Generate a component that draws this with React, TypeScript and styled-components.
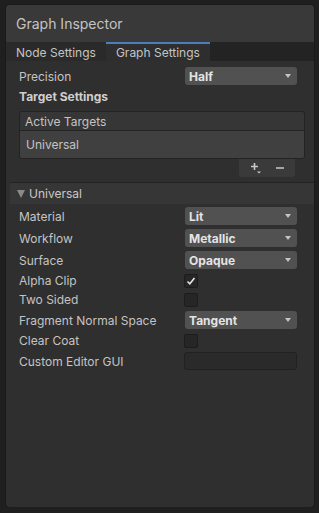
import styled, { createGlobalStyle } from "styled-components";

const Global = createGlobalStyle`
    html, body {
        margin: 0;
        background: #1f1f1f;
        font-family: Inter, "Noto Sans", sans-serif;
        font-size: 12px;
        color: #c4c4c4;
    }
`;

const Panel = styled.div`
    margin: 5px 0 0 6px;
    width: 308px;
    height: 502px;
    background: #2f2f2f;
    border-radius: 4px;
    overflow: hidden;
    box-shadow: 0 0 0 1px #1a1a1a;
    display: flex;
    flex-direction: column;
`;

const Header = styled.div`
    height: 37px;
    background: #393939;
    display: flex;
    align-items: center;
    padding-left: 10px;
    font-size: 14px;
    color: #c4c4c4;
`;

const TabBar = styled.div`
    height: 19px;
    background: #232323;
    display: flex;
`;

const Tab = styled.div<{ active?: boolean }>`
    box-sizing: border-box;
    height: 19px;
    padding: 0 10px;
    display: flex;
    align-items: center;
    background: ${(p) => (p.active ? "#2e2e2e" : "#2a2a2a")};
    border-top: 2px solid ${(p) => (p.active ? "#4a7fbd" : "transparent")};
    color: #c4c4c4;
`;

const Section = styled.div`
    padding-top: 6px;
    display: flex;
    flex-direction: column;
`;

const Row = styled.div<{ h?: number; top?: number }>`
    height: ${(p) => p.h ?? 18}px;
    margin-top: ${(p) => p.top ?? 0}px;
    display: flex;
    align-items: center;
    padding-left: 13px;
`;

const Label = styled.div<{ bold?: boolean }>`
    width: 166px;
    font-weight: ${(p) => (p.bold ? 700 : 400)};
    color: ${(p) => (p.bold ? "#cfcfcf" : "#c4c4c4")};
    white-space: nowrap;
`;

const Dropdown = styled.div`
    box-sizing: border-box;
    width: 112px;
    height: 18px;
    background: #515151;
    border-radius: 3px;
    display: flex;
    align-items: center;
    justify-content: space-between;
    padding: 0 6px 0 4px;
    font-weight: 700;
    color: #e4e4e4;
`;

const Arrow = styled.span`
    width: 0;
    height: 0;
    border-left: 3.5px solid transparent;
    border-right: 3.5px solid transparent;
    border-top: 4px solid #c4c4c4;
`;

const Check = styled.div`
    box-sizing: border-box;
    width: 14px;
    height: 14px;
    margin-left: -1px;
    background: #262626;
    border: 1px solid #1c1c1c;
    border-radius: 2px;
    display: flex;
    align-items: center;
    justify-content: center;
`;

const TextField = styled.div`
    box-sizing: border-box;
    width: 113px;
    height: 18px;
    margin-left: -1px;
    background: #2a2a2a;
    border: 1px solid #212121;
    border-radius: 3px;
`;

const List = styled.div`
    margin: 7px 9px 0 13px;
    display: flex;
    flex-direction: column;
`;

const ListBox = styled.div`
    border: 1px solid #232323;
    border-radius: 3px;
    overflow: hidden;
`;

const ListHeader = styled.div`
    height: 18px;
    background: #363636;
    border-bottom: 1px solid #232323;
    display: flex;
    align-items: center;
    padding-left: 5px;
`;

const ListItem = styled.div`
    height: 27px;
    background: #404040;
    display: flex;
    align-items: center;
    padding-left: 6px;
`;

const ListFooter = styled.div`
    align-self: flex-end;
    margin-right: 10px;
    width: 56px;
    height: 18px;
    background: #3a3a3a;
    border-radius: 0 0 3px 3px;
    display: flex;
    align-items: center;
    justify-content: space-around;
    padding: 0 4px;
    box-sizing: border-box;
`;

const Foldout = styled.div`
    margin: 5px 0 0 4px;
    border-top: 1px solid #232323;
    height: 21px;
    background: #363636;
    display: flex;
    align-items: center;
    padding-left: 7px;
    gap: 4px;
    color: #c8c8c8;
`;

const Triangle = styled.span`
    width: 0;
    height: 0;
    border-left: 4px solid transparent;
    border-right: 4px solid transparent;
    border-top: 8px solid #8a8a8a;
`;

const Props = styled.div`
    padding-top: 3px;
    display: flex;
    flex-direction: column;
    gap: 4px;
`;

const PlusIcon = () => (
    <svg width="12" height="12" viewBox="0 0 12 12">
        <path d="M4.5 1v7M1 4.5h7" stroke="#c8c8c8" strokeWidth="1.6" />
        <path d="M7 9.5h4l-2 2z" fill="#c8c8c8" />
    </svg>
);

const MinusIcon = () => (
    <svg width="10" height="10" viewBox="0 0 10 10">
        <path d="M1 5h8" stroke="#c8c8c8" strokeWidth="1.6" />
    </svg>
);

const CheckMark = () => (
    <svg width="10" height="10" viewBox="0 0 10 10">
        <path d="M1.5 5.5l2.3 2.3L8.5 2" stroke="#e6e6e6" strokeWidth="1.6" fill="none" />
    </svg>
);

type Prop =
    | { label: string; kind: "dropdown"; value: string }
    | { label: string; kind: "check"; checked: boolean }
    | { label: string; kind: "text" };

const props: Prop[] = [
    { label: "Material", kind: "dropdown", value: "Lit" },
    { label: "Workflow", kind: "dropdown", value: "Metallic" },
    { label: "Surface", kind: "dropdown", value: "Opaque" },
    { label: "Alpha Clip", kind: "check", checked: true },
    { label: "Two Sided", kind: "check", checked: false },
    { label: "Fragment Normal Space", kind: "dropdown", value: "Tangent" },
    { label: "Clear Coat", kind: "check", checked: false },
    { label: "Custom Editor GUI", kind: "text" },
];

const App = () => {
    return (
        <>
            <Global />
            <Panel>
                <Header>Graph Inspector</Header>
                <TabBar>
                    <Tab>Node Settings</Tab>
                    <Tab active>Graph Settings</Tab>
                </TabBar>
                <Section>
                    <Row>
                        <Label>Precision</Label>
                        <Dropdown>
                            Half
                            <Arrow />
                        </Dropdown>
                    </Row>
                    <Row h={16} top={3}>
                        <Label bold>Target Settings</Label>
                    </Row>
                    <List>
                        <ListBox>
                            <ListHeader>Active Targets</ListHeader>
                            <ListItem>Universal</ListItem>
                        </ListBox>
                        <ListFooter>
                            <PlusIcon />
                            <MinusIcon />
                        </ListFooter>
                    </List>
                    <Foldout>
                        <Triangle />
                        Universal
                    </Foldout>
                    <Props>
                        {props.map((p) => (
                            <Row key={p.label} h={p.kind === "check" ? 15 : 18}>
                                <Label>{p.label}</Label>
                                {p.kind === "dropdown" && (
                                    <Dropdown>
                                        {p.value}
                                        <Arrow />
                                    </Dropdown>
                                )}
                                {p.kind === "check" && (
                                    <Check>{p.checked && <CheckMark />}</Check>
                                )}
                                {p.kind === "text" && <TextField />}
                            </Row>
                        ))}
                    </Props>
                </Section>
            </Panel>
        </>
    );
};

export default App;
